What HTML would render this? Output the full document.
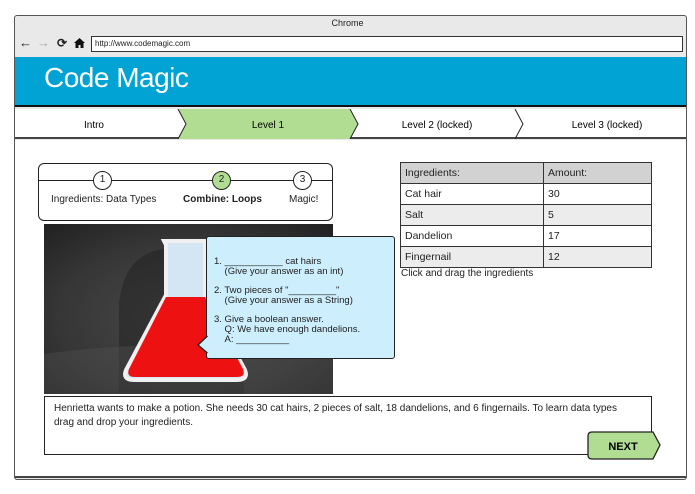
<!DOCTYPE html>
<html><head><meta charset="utf-8"><style>
*{margin:0;padding:0;box-sizing:border-box}
body{width:695px;height:494px;background:#fff;position:relative;overflow:hidden;font-family:"Liberation Sans",Arial,sans-serif;color:#222}
.a{position:absolute}
table{border-collapse:collapse;font-size:10.5px}
td{border:1px solid #333;height:21px;padding:0 4px}
</style></head><body>
<div class="a" style="left:14px;top:15px;width:673px;height:465px;background:#e9e9e9;border:1px solid #555;border-radius:3px"></div>
<div class="a" style="left:0;top:18px;width:695px;text-align:center;font-size:9px">Chrome</div>
<div class="a" style="left:19px;top:36px;font-size:13px;line-height:14px;font-weight:bold">&#8592;</div>
<div class="a" style="left:37px;top:36px;font-size:13px;line-height:14px;color:#aaa;font-weight:bold">&#8594;</div>
<div class="a" style="left:57px;top:36px;font-size:12px;line-height:14px;font-weight:bold">&#10227;</div>
<svg class="a" style="left:74px;top:38px" width="11" height="10"><path d="M5.5 0L0 5h1.5v5h3V7h2v3h3V5H11z" fill="#111"/></svg>
<div class="a" style="left:91px;top:36px;width:592px;height:16px;background:#fff;border:1px solid #333;font-size:8px;line-height:14px;padding-left:3px">http://www.codemagic.com</div>
<div class="a" style="left:15px;top:57px;width:671px;height:50px;background:#00a3d3;border-bottom:2px solid #111"></div>
<div class="a" style="left:44px;top:62px;font-size:28px;color:#fff;letter-spacing:-0.5px">Code Magic</div>
<div class="a" style="left:15px;top:109px;width:671px;height:30px;background:#fff;border-bottom:2px solid #444"></div>
<svg class="a" style="left:15px;top:109px" width="671" height="30">
<polygon points="163,0 335,0 343,15 335,30 163,30 171,15" fill="#b1dd92"/>
<polyline points="163,0 171,15 163,30" fill="none" stroke="#222"/>
<polyline points="335,0 343,15 335,30" fill="none" stroke="#222"/>
<polyline points="500,0 508,15 500,30" fill="none" stroke="#222"/>
<text x="79" y="19" font-size="10" text-anchor="middle" font-family="Liberation Sans">Intro</text>
<text x="253" y="19" font-size="10" text-anchor="middle" font-family="Liberation Sans">Level 1</text>
<text x="422" y="19" font-size="10" text-anchor="middle" font-family="Liberation Sans">Level 2 (locked)</text>
<text x="592" y="19" font-size="10" text-anchor="middle" font-family="Liberation Sans">Level 3 (locked)</text>
</svg>
<div class="a" style="left:15px;top:140px;width:671px;height:338px;background:#fff;border-bottom:2px solid #444"></div>
<div class="a" style="left:38px;top:163px;width:295px;height:58px;border:1.5px solid #222;border-radius:6px;background:#fff"></div>
<div class="a" style="left:38px;top:180px;width:295px;height:1px;background:#222"></div>
<div class="a" style="left:93px;top:171px;width:19px;height:19px;border:1.5px solid #222;border-radius:50%;background:#fff;font-size:10px;text-align:center;line-height:16px">1</div>
<div class="a" style="left:212px;top:171px;width:19px;height:19px;border:1.5px solid #222;border-radius:50%;background:#b1dd92;font-size:10px;text-align:center;line-height:16px">2</div>
<div class="a" style="left:293px;top:171px;width:19px;height:19px;border:1.5px solid #222;border-radius:50%;background:#fff;font-size:10px;text-align:center;line-height:16px">3</div>
<div class="a" style="left:51px;top:194px;font-size:10px">Ingredients: Data Types</div>
<div class="a" style="left:183px;top:194px;font-size:10px;font-weight:bold">Combine: Loops</div>
<div class="a" style="left:289px;top:194px;font-size:10px">Magic!</div>
<svg class="a" style="left:44px;top:224px" width="289" height="170">
<defs><radialGradient id="g" cx="0.5" cy="0.55" r="0.75"><stop offset="0" stop-color="#4a4a4a"/><stop offset="0.6" stop-color="#363636"/><stop offset="1" stop-color="#202020"/></radialGradient></defs>
<rect width="289" height="170" fill="url(#g)"/>
<path d="M75 170 V80 Q80 30 120 25 H200 V170Z" fill="#1c1c1c" opacity="0.45"/>
<path d="M0 130 Q140 110 289 135 V170 H0Z" fill="#555" opacity="0.35"/>
<path d="M120 17h44l-3 4v50l40 75q4 10-8 10H90q-12 0-8-10l40-75v-50z" fill="#d4e6f4" stroke="#f0f0f0" stroke-width="4"/>
<path d="M122 73h39l38 72q3 8-6 8H91q-9 0-6-8z" fill="#ee1111"/>
</svg>
<div class="a" style="left:206px;top:236px;width:189px;height:123px;background:#cdeefc;border:1.5px solid #222;border-radius:3px"></div>
<svg class="a" style="left:197px;top:335px" width="12" height="20"><path d="M10.5 1L1 10l9.5 8" fill="#cdeefc" stroke="#222" stroke-width="1.3"/></svg>
<div class="a" style="left:214px;top:257px;font-size:9.5px;line-height:10px">1. ___________ cat hairs<br>&nbsp;&nbsp;&nbsp;&nbsp;(Give your answer as an int)<div style="height:9px"></div>2. Two pieces of "_________"<br>&nbsp;&nbsp;&nbsp;&nbsp;(Give your answer as a String)<div style="height:9px"></div>3. Give a boolean answer.<br>&nbsp;&nbsp;&nbsp;&nbsp;Q: We have enough dandelions.<br>&nbsp;&nbsp;&nbsp;&nbsp;A: __________</div>
<table class="a" style="left:400px;top:162px;width:252px">
<tr style="background:#d2d2d2"><td style="width:143px">Ingredients:</td><td>Amount:</td></tr>
<tr><td>Cat hair</td><td>30</td></tr>
<tr style="background:#ececec"><td>Salt</td><td>5</td></tr>
<tr><td>Dandelion</td><td>17</td></tr>
<tr style="background:#ececec"><td>Fingernail</td><td>12</td></tr>
</table>
<div class="a" style="left:401px;top:268px;font-size:10px">Click and drag the ingredients</div>
<div class="a" style="left:44px;top:396px;width:608px;height:59px;border:1.5px solid #222;background:#fff;font-size:10px;line-height:14px;padding:5px 30px 5px 9px">Henrietta wants to make a potion. She needs 30 cat hairs, 2 pieces of salt, 18 dandelions, and 6 fingernails. To learn data types drag and drop your ingredients.</div>
<svg class="a" style="left:587px;top:431px" width="75" height="30"><path d="M5 1h61l7 13-7 14H5q-4 0-4-4V5q0-4 4-4z" fill="#b1dd92" stroke="#222" stroke-width="1.3"/><text x="36" y="19" font-size="11" font-weight="bold" text-anchor="middle" font-family="Liberation Sans">NEXT</text></svg>
</body></html>
